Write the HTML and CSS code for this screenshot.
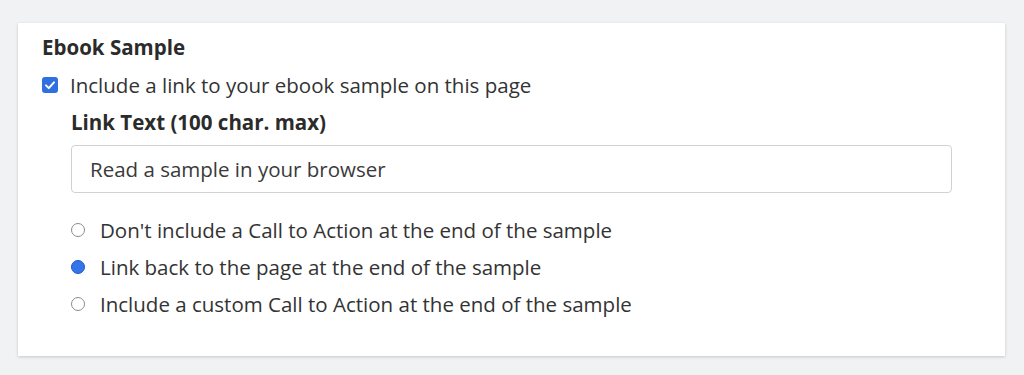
FILE: index.html
```html
<!DOCTYPE html>
<html>
<head>
<meta charset="utf-8">
<link rel="stylesheet" href="styles.css">
</head>
<body>
<div class="page">
  <section class="card">
    <h2 class="title">Ebook Sample</h2>
    <label class="check-row">
      <span class="checkbox"><svg viewBox="0 0 16 16" width="16" height="16"><path d="M4 8.4 L6.8 11.1 L12 5.4" fill="none" stroke="#fff" stroke-width="2" stroke-linecap="round" stroke-linejoin="round"/></svg></span>
      <span>Include a link to your ebook sample on this page</span>
    </label>
    <div class="indent">
      <div class="field-label">Link Text (100 char. max)</div>
      <div class="input">Read a sample in your browser</div>
      <div class="radios">
        <label class="radio-row"><span class="radio"></span><span>Don't include a Call to Action at the end of the sample</span></label>
        <label class="radio-row"><span class="radio on"></span><span>Link back to the page at the end of the sample</span></label>
        <label class="radio-row"><span class="radio"></span><span>Include a custom Call to Action at the end of the sample</span></label>
      </div>
    </div>
  </section>
</div>
</body>
</html>
```

FILE: styles.css
```css
html, body {
  margin: 0;
  padding: 0;
  background: #f1f2f4;
}
body {
  font-family: "Open Sans", "Noto Sans", sans-serif;
  color: #333;
  width: 1024px;
  height: 375px;
  overflow: hidden;
}
.page {
  padding: 23px 19px 0 18px;
}
.card {
  background: #fff;
  height: 333px;
  box-sizing: border-box;
  padding: 10px 24px 0 24px;
  box-shadow: 0 1px 3px rgba(0,0,0,0.18);
}
.title {
  margin: 0;
  font-size: 20.5px;
  font-weight: 700;
  line-height: 28px;
  color: #2b2b2b;
}
.check-row {
  display: flex;
  align-items: center;
  gap: 12px;
  font-size: 20.5px;
  line-height: 28px;
  margin-top: 10px;
}
.checkbox {
  width: 16px;
  height: 16px;
  border-radius: 3px;
  background: #2f6fe0;
  display: flex;
  flex-shrink: 0;
}
.indent {
  padding-left: 29px;
}
.field-label {
  font-size: 20.5px;
  font-weight: 700;
  line-height: 28px;
  margin-top: 9px;
  color: #2b2b2b;
}
.input {
  margin-top: 9px;
  width: 881px;
  height: 48px;
  box-sizing: border-box;
  border: 1px solid #cfd2d6;
  border-radius: 4px;
  padding: 0 18px;
  display: flex;
  align-items: center;
  font-size: 20.5px;
  color: #3a3a3a;
}
.radios {
  margin-top: 23px;
  display: flex;
  flex-direction: column;
  gap: 9px;
}
.radio-row {
  display: flex;
  align-items: center;
  gap: 15px;
  font-size: 20.5px;
  line-height: 28px;
}
.radio {
  width: 14px;
  height: 14px;
  border: 1.5px solid #8c8c8c;
  border-radius: 50%;
  box-sizing: border-box;
  flex-shrink: 0;
}
.radio.on {
  border: 1.5px solid #2456c4;
  background: #3575ea;
}
```
